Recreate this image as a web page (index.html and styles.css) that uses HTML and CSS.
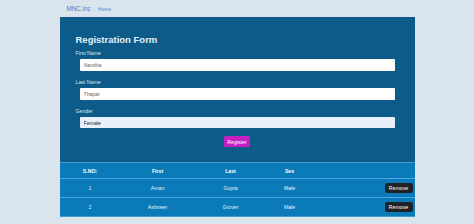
FILE: index.html
```html
<!DOCTYPE html>
<html lang="en">
<head>
    <meta charset="UTF-8">
    <meta name="viewport" content="width=device-width, initial-scale=1.0">
    <title>Registration - MNC.inc</title>
    <link rel="stylesheet" href="styles.css">
</head>
<body>
    <div class="page">
        <nav class="navbar">
            <a href="#" class="brand">MNC.inc</a>
            <a href="#" class="nav-link">Home</a>
        </nav>

        <div class="form-box">
            <h1>Registration Form</h1>
            <label for="firstName">First Name</label>
            <input type="text" id="firstName" value="Nandita">
            <label for="lastName">Last Name</label>
            <input type="text" id="lastName" value="Thapar">
            <label for="gender">Gender</label>
            <select id="gender">
                <option>Female</option>
                <option>Male</option>
            </select>
            <div class="actions">
                <button class="button button-register">Register</button>
            </div>
        </div>

        <table id="usersTable">
            <colgroup>
                <col class="col-no">
                <col class="col-first">
                <col class="col-last">
                <col class="col-sex">
                <col class="col-action">
            </colgroup>
            <thead>
                <tr>
                    <th>S.NO:</th>
                    <th>First</th>
                    <th>Last</th>
                    <th>Sex</th>
                    <th></th>
                </tr>
            </thead>
            <tbody>
                <tr>
                    <td>1</td>
                    <td>Aman</td>
                    <td>Gupta</td>
                    <td>Male</td>
                    <td class="cell-action"><button class="button button-remove">Remove</button></td>
                </tr>
                <tr>
                    <td>2</td>
                    <td>Ashneer</td>
                    <td>Grover</td>
                    <td>Male</td>
                    <td class="cell-action"><button class="button button-remove">Remove</button></td>
                </tr>
            </tbody>
        </table>
    </div>
</body>
</html>
```

FILE: styles.css
```css
body {
    font-family: "Liberation Sans", Arial, sans-serif;
    background-color: #d9e4ec;
    margin: 0;
    padding: 0;
}

.page {
    width: 355px;
    margin: 0 auto;
}

.navbar {
    height: 17px;
    display: flex;
    align-items: center;
    gap: 7px;
    padding: 0 7px;
}

.brand {
    color: #3a7fd2;
    font-size: 6.3px;
    text-decoration: none;
}

.nav-link {
    color: #4d8bd3;
    font-size: 5px;
    text-decoration: none;
}

.form-box {
    background-color: #0c5b88;
    padding: 17px 16px 15px;
}

h1 {
    color: #e3f1fc;
    font-size: 9.5px;
    line-height: 11px;
    margin: 0 0 5px;
}

label {
    display: block;
    color: #d7e8f5;
    font-size: 5.2px;
    line-height: 6px;
    margin-bottom: 3px;
}

input,
select {
    display: block;
    box-sizing: border-box;
    width: 315px;
    height: 12px;
    margin: 0 4px 8px;
    padding: 0 4px;
    border: none;
    border-radius: 1px;
    font-family: inherit;
    font-size: 5.2px;
    color: #666;
    background-color: #ffffff;
    outline: none;
}

select {
    height: 11px;
    color: #222;
    background-color: #e8f1fb;
    appearance: none;
    padding-left: 4px;
}

.actions {
    display: flex;
    justify-content: center;
}

.button {
    display: inline-block;
    border: none;
    color: #ffffff;
    font-family: inherit;
    font-size: 5.2px;
    padding: 0;
    cursor: pointer;
}

.button-register {
    width: 26px;
    height: 11px;
    border-radius: 1.5px;
    background-color: #c41fc3;
}

table {
    width: 100%;
    table-layout: fixed;
    border-collapse: collapse;
    background-color: #0a7ab8;
    border-top: 1px solid #3f9dd2;
    border-bottom: 1px solid #3f9dd2;
}

.col-no { width: 61px; }
.col-first { width: 74px; }
.col-last { width: 72px; }
.col-sex { width: 46px; }
.col-action { width: 102px; }

th, td {
    padding: 0;
    text-align: center;
    color: #e6f2fb;
    font-size: 5.2px;
}

th {
    height: 15px;
    font-weight: bold;
    color: #ffffff;
}

td {
    height: 18px;
    border-top: 1px solid #4aa5da;
}

.cell-action {
    text-align: right;
    padding-right: 2px;
}

.button-remove {
    width: 28px;
    height: 10px;
    border-radius: 2px;
    background-color: #1f2326;
    vertical-align: middle;
}
```
